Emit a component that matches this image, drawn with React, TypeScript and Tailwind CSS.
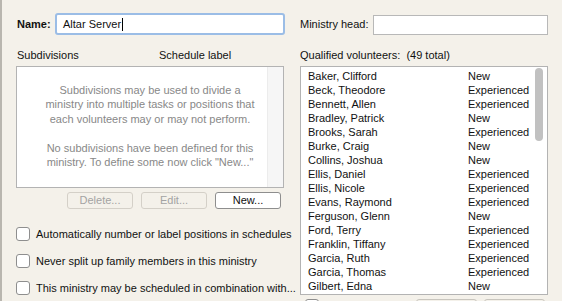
import React from "react";

const volunteers: [string, string][] = [
  ["Baker, Clifford", "New"],
  ["Beck, Theodore", "Experienced"],
  ["Bennett, Allen", "Experienced"],
  ["Bradley, Patrick", "New"],
  ["Brooks, Sarah", "Experienced"],
  ["Burke, Craig", "New"],
  ["Collins, Joshua", "New"],
  ["Ellis, Daniel", "Experienced"],
  ["Ellis, Nicole", "Experienced"],
  ["Evans, Raymond", "Experienced"],
  ["Ferguson, Glenn", "New"],
  ["Ford, Terry", "Experienced"],
  ["Franklin, Tiffany", "Experienced"],
  ["Garcia, Ruth", "Experienced"],
  ["Garcia, Thomas", "Experienced"],
  ["Gilbert, Edna", "New"],
];

function Checkbox({ label }: { label: string }) {
  return (
    <label className="flex h-[14px] items-center gap-[6px] whitespace-nowrap">
      <span className="h-[14px] w-[14px] shrink-0 rounded-[3px] border border-[#8e8e8e] bg-white" />
      <span>{label}</span>
    </label>
  );
}

function Button({ label, disabled = false }: { label: string; disabled?: boolean }) {
  return (
    <button
      className={`h-[17px] w-[66px] rounded-[3px] border text-[11px] leading-none ${
        disabled ? "border-[#d4d0c8] bg-[#f4f1ea] text-[#a3a3a3]" : "border-[#8e8e8e] bg-white text-[#111]"
      }`}
    >
      {label}
    </button>
  );
}

export default function App() {
  return (
    <div
      className="flex h-[301px] w-[562px] items-start gap-[15px] overflow-hidden border-l-2 border-[#b9b6af] bg-[#f4f1ea] pl-[14px] pt-[13px] text-[11px] text-[#111]"
      style={{ fontFamily: '"Liberation Sans", Arial, sans-serif' }}
    >
      <div className="flex w-[269px] shrink-0 flex-col">
        <div className="flex h-[22px] shrink-0 items-center">
          <span className="w-[39px] pl-[1px] font-bold">Name:</span>
          <div className="flex h-[22px] flex-1 items-center rounded-[3px] border-2 border-[#9bbde6] bg-white pl-[6px]">
            Altar Server<span className="ml-[1px] h-[13px] w-px bg-black" />
          </div>
        </div>

        <div className="flex h-[31px] shrink-0 items-end pb-[4px] pl-[1px] leading-[14px]">
          <span className="w-[142px]">Subdivisions</span>
          <span>Schedule label</span>
        </div>

        <div className="relative h-[122px] w-[268px] shrink-0 border border-[#b3b3b3] bg-white pt-[16px] text-center leading-[14.4px] text-[#888]">
          <p>Subdivisions may be used to divide a</p>
          <p>ministry into multiple tasks or positions that</p>
          <p>each volunteers may or may not perform.</p>
          <p className="mt-[14.4px]">No subdivisions have been defined for this</p>
          <p>ministry. To define some now click "New..."</p>
          <div className="absolute bottom-0 right-0 top-0 w-[16px] border-l border-[#ececec] bg-[#f6f6f6]" />
        </div>

        <div className="mt-[4px] flex w-[265px] shrink-0 justify-end gap-[8px]">
          <Button label="Delete..." disabled />
          <Button label="Edit..." disabled />
          <Button label="New..." />
        </div>

        <div className="mt-[18px] flex shrink-0 flex-col gap-[13px]">
          <Checkbox label="Automatically number or label positions in schedules" />
          <Checkbox label="Never split up family members in this ministry" />
          <Checkbox label="This ministry may be scheduled in combination with..." />
        </div>
      </div>

      <div className="flex w-[248px] shrink-0 flex-col">
        <div className="flex h-[22px] shrink-0 items-center">
          <span className="w-[73px]">Ministry head:</span>
          <div className="mt-[1px] h-[20px] flex-1 border border-[#b8b8b8] bg-white" />
        </div>

        <div className="flex h-[31px] shrink-0 items-end pb-[4px] leading-[14px]">
          <span>Qualified volunteers:&nbsp; (49 total)</span>
        </div>

        <div className="relative h-[229px] shrink-0 overflow-hidden border border-[#b3b3b3] bg-white pl-[7px] pt-[2px]">
          {volunteers.map(([name, status]) => (
            <div key={name} className="flex h-[14px] items-center leading-[14px]">
              <span className="w-[160px]">{name}</span>
              <span>{status}</span>
            </div>
          ))}
          <div className="absolute bottom-0 right-0 top-0 w-[15px] bg-white">
            <div className="ml-[3px] mt-[1px] h-[73px] w-[8px] rounded-full bg-[#c1c1c1]" />
          </div>
        </div>

        <div className="mt-[4px] flex shrink-0 items-start">
          <span className="ml-[5px] h-[14px] w-[14px] rounded-[3px] border border-[#8e8e8e] bg-white" />
          <div className="ml-auto mr-[3px] flex gap-[7px]">
            <span className="h-[18px] w-[61px] rounded-[3px] border border-[#c8c5be] bg-[#f4f1ea]" />
            <span className="h-[18px] w-[61px] rounded-[3px] border border-[#c8c5be] bg-[#f4f1ea]" />
          </div>
        </div>
      </div>
    </div>
  );
}
